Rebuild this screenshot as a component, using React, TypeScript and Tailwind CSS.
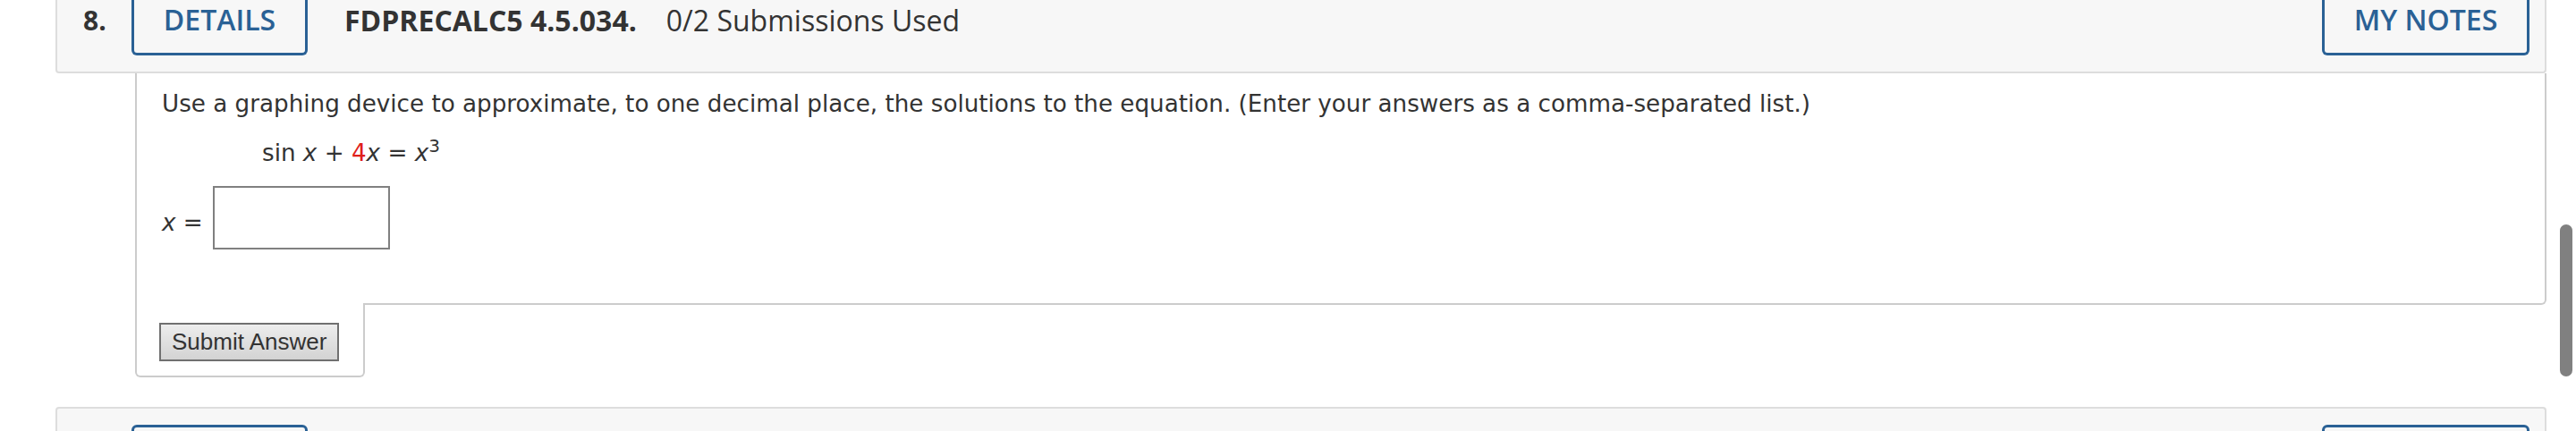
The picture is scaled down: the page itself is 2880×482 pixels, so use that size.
import React from 'react';

const openSans = { fontFamily: '"Open Sans", "Noto Sans", sans-serif' };

const QuestionHeader: React.FC<{ number?: string; code?: string; used?: string }> = ({ number, code, used }) => (
    <div
        className="flex items-start h-[82px] ml-[62px] mr-[33px] bg-[#f7f7f7] border-x-2 border-b-2 border-[#dddddd] rounded-b-[4px] text-[#333333]"
        style={openSans}
    >
        <span className="w-[83px] pl-[29px] pt-[1px] text-[30px] leading-[44px] font-bold">{number}</span>
        <button className="w-[197px] h-[62px] border-x-[3px] border-b-[3px] border-[#2a6195] rounded-b-[6px] text-[#2a6195] text-[32px] leading-[44px] font-semibold pb-[16px]">
            DETAILS
        </button>
        <span className="ml-[41px] pt-[1px] text-[32px] leading-[44px] font-bold">{code}</span>
        <span className="ml-[33px] pt-[1px] text-[32px] leading-[44px]">{used}</span>
        <button className="ml-auto mr-[17px] w-[232px] h-[62px] border-x-[3px] border-b-[3px] border-[#2a6195] rounded-b-[6px] text-[#2a6195] text-[32px] leading-[44px] font-semibold pb-[16px]">
            MY NOTES
        </button>
    </div>
);

export default function App() {
    return (
        <div className="relative h-[482px] overflow-hidden bg-white">
            <QuestionHeader number="8." code="FDPRECALC5 4.5.034." used="0/2 Submissions Used" />

            {/* Question body */}
            <div
                className="ml-[151px] mr-[33px] text-[#333333] text-[26.2px]"
                style={{ fontFamily: '"DejaVu Sans", Verdana, sans-serif' }}
            >
                <div className="border-x-2 border-b-2 border-[#cccccc] rounded-br-[6px] pl-[28px] pt-[16px] pb-[60px]">
                    <p className="leading-[36px]">
                        Use a graphing device to approximate, to one decimal place, the solutions to the equation. (Enter
                        your answers as a comma-separated list.)
                    </p>
                    <p className="mt-[19px] ml-[112px] leading-[36px]">
                        sin <i>x</i> + <span className="text-[#e0201b]">4</span>
                        <i>x</i> = <i>x</i>
                        <sup className="text-[20px]">3</sup>
                    </p>
                    <div className="mt-[19px] flex items-center">
                        <span className="mt-[10px] leading-[36px]">
                            <i>x</i> =
                        </span>
                        <input
                            type="text"
                            className="ml-[11px] w-[198px] h-[71px] border-2 border-[#808080] bg-white outline-none"
                        />
                    </div>
                </div>

                <div className="relative -mt-[2px] w-[257px] bg-white border-x-2 border-b-2 border-[#cccccc] rounded-b-[6px] pl-[25px] pt-[22px] pb-[16px]">
                    <button
                        className="h-[43px] px-[12px] border-2 border-[#707070] bg-gradient-to-b from-[#ededed] to-[#d3d3d3] text-[26px] leading-[39px] text-[#333333]"
                        style={{ fontFamily: '"Liberation Sans", Arial, sans-serif' }}
                    >
                        Submit Answer
                    </button>
                </div>
            </div>

            {/* Next question header */}
            <div
                className="mt-[33px] ml-[62px] mr-[33px] h-[60px] bg-[#f7f7f7] border-x-2 border-t-2 border-[#dddddd] rounded-t-[4px] flex items-start pt-[18px]"
                style={openSans}
            >
                <div className="ml-[83px] w-[197px] h-[60px] border-[3px] border-[#2a6195] rounded-t-[6px]" />
                <div className="ml-auto mr-[17px] w-[232px] h-[60px] border-[3px] border-[#2a6195] rounded-t-[6px]" />
            </div>

            {/* Scrollbar thumb */}
            <div className="absolute right-[4px] top-[251px] w-[14px] h-[170px] rounded-full bg-[#808080]" />
        </div>
    );
}
